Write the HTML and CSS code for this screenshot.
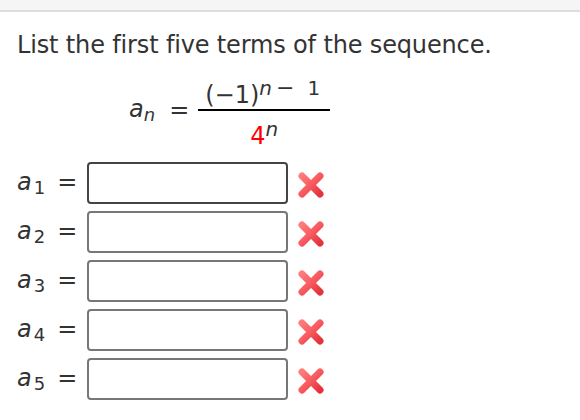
FILE: index.html
```html
<!DOCTYPE html>
<html lang="en">
<head>
<meta charset="UTF-8">
<title>Sequence</title>
<link rel="stylesheet" href="styles.css">
</head>
<body>

<div class="topbar"></div>

<div class="question">
    <p class="prompt">List the first five terms of the sequence.</p>

    <div class="formula">
        <span class="var">a<sub>n</sub></span>
        <span class="eq">=</span>
        <span class="frac">
            <span class="num">(&minus;1)<sup><i>n</i><span class="op">&minus;</span>1</sup></span>
            <span class="den"><span class="red">4</span><sup><i>n</i></sup></span>
        </span>
    </div>

    <div class="answers">
        <div class="row">
            <span class="label"><i>a</i><sub>1</sub><span class="eq2">=</span></span>
            <input type="text" class="answer first">
            <svg class="wrong" viewBox="0 0 28 28"><path d="M5 5 L23 23 M23 5 L5 23"/></svg>
        </div>
        <div class="row">
            <span class="label"><i>a</i><sub>2</sub><span class="eq2">=</span></span>
            <input type="text" class="answer">
            <svg class="wrong" viewBox="0 0 28 28"><path d="M5 5 L23 23 M23 5 L5 23"/></svg>
        </div>
        <div class="row">
            <span class="label"><i>a</i><sub>3</sub><span class="eq2">=</span></span>
            <input type="text" class="answer">
            <svg class="wrong" viewBox="0 0 28 28"><path d="M5 5 L23 23 M23 5 L5 23"/></svg>
        </div>
        <div class="row">
            <span class="label"><i>a</i><sub>4</sub><span class="eq2">=</span></span>
            <input type="text" class="answer">
            <svg class="wrong" viewBox="0 0 28 28"><path d="M5 5 L23 23 M23 5 L5 23"/></svg>
        </div>
        <div class="row">
            <span class="label"><i>a</i><sub>5</sub><span class="eq2">=</span></span>
            <input type="text" class="answer">
            <svg class="wrong" viewBox="0 0 28 28"><path d="M5 5 L23 23 M23 5 L5 23"/></svg>
        </div>
    </div>
</div>

<svg width="0" height="0" style="position:absolute">
    <defs>
        <linearGradient id="redx" x1="0" y1="0" x2="1" y2="1">
            <stop offset="0" stop-color="#ff7a7a"/>
            <stop offset="0.5" stop-color="#f75a5f"/>
            <stop offset="1" stop-color="#e3343b"/>
        </linearGradient>
    </defs>
</svg>

</body>
</html>
```

FILE: styles.css
```css
body {
    margin: 0;
    padding: 0;
    background-color: #fff;
    color: #333;
    font-family: "DejaVu Sans", Verdana, sans-serif;
}
.topbar {
    height: 10px;
    background-color: #f5f5f5;
    border-bottom: 2px solid #ddd;
}
.question {
    padding: 0 17px;
}
.prompt {
    font-size: 24px;
    letter-spacing: -0.15px;
    margin: 18px 0 0 0;
    line-height: 30px;
}

/* formula */
.formula {
    display: flex;
    align-items: center;
    margin: 14px 0 0 112px;
    font-size: 24px;
}
.var {
    font-style: italic;
    margin-bottom: 6px;
}
.formula sub {
    font-size: 18px;
    vertical-align: -4px;
    font-style: italic;
}
.eq {
    margin: 0 9px 6px 14px;
}
.frac {
    display: inline-flex;
    flex-direction: column;
    align-items: center;
}
.num {
    padding: 0 10px 0 7px;
    border-bottom: 2px solid #000;
    line-height: 28px;
}
.den {
    line-height: 30px;
    padding-top: 3px;
}
.frac sup {
    font-size: 20px;
    vertical-align: 8px;
}
.op {
    font-size: 22px;
    margin: 0 13px 0 4px;
}
.red {
    color: #f00;
}

/* answer rows */
.answers {
    margin-top: 11px;
}
.row {
    display: flex;
    align-items: center;
    margin-bottom: 7px;
}
.label {
    width: 70px;
    font-size: 24px;
}
.label sub {
    font-size: 18px;
    vertical-align: -4px;
    margin-left: 2px;
}
.eq2 {
    margin-left: 12px;
}
.answer {
    width: 201px;
    height: 42px;
    box-sizing: border-box;
    border: 2px solid #777;
    border-radius: 4px;
    padding: 4px 8px;
    font-size: 18px;
}
.answer.first {
    border-color: #444;
}
.wrong {
    width: 28px;
    height: 28px;
    margin: 4px 0 0 9px;
}
.wrong path {
    stroke: url(#redx);
    stroke-width: 7;
    stroke-linecap: round;
    fill: none;
}
```
